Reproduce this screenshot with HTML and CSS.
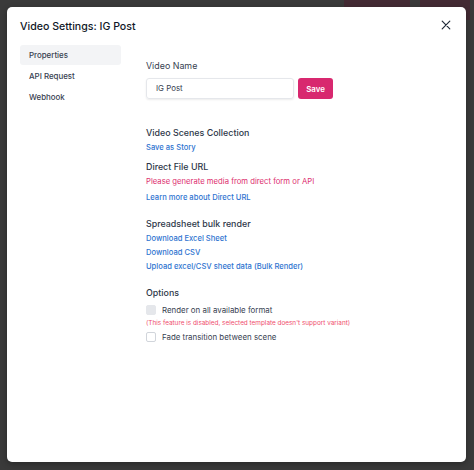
FILE: index.html
```html
<!DOCTYPE html>
<html lang="en">
<head>
<meta charset="utf-8">
<title>Video Settings</title>
<link rel="stylesheet" href="styles.css">
</head>
<body>
<div class="backdrop">
  <span class="bg-block bg-a"></span>
  <span class="bg-block bg-b"></span>
</div>
<div class="modal">
  <div class="modal-header">
    <h1 class="modal-title">Video Settings: IG Post</h1>
    <button class="close" aria-label="Close">
      <svg width="10" height="10" viewBox="0 0 10 10"><path d="M1.2 1.2L8.8 8.8M8.8 1.2L1.2 8.8" stroke="#1f2937" stroke-width="1.2" stroke-linecap="round"/></svg>
    </button>
  </div>
  <div class="modal-body">
    <nav class="side">
      <a class="side-item active">Properties</a>
      <a class="side-item">API Request</a>
      <a class="side-item">Webhook</a>
    </nav>
    <main class="content">
      <section class="name-section">
        <label class="label">Video Name</label>
        <div class="name-row">
          <div class="input">IG Post</div>
          <button class="save">Save</button>
        </div>
      </section>

      <section class="group first">
        <h2 class="heading">Video Scenes Collection</h2>
        <a class="link">Save as Story</a>
      </section>

      <section class="group tight">
        <h2 class="heading">Direct File URL</h2>
        <p class="warn">Please generate media from direct form or API</p>
        <a class="link more">Learn more about Direct URL</a>
      </section>

      <section class="group">
        <h2 class="heading">Spreadsheet bulk render</h2>
        <a class="link">Download Excel Sheet</a>
        <a class="link">Download CSV</a>
        <a class="link">Upload excel/CSV sheet data (Bulk Render)</a>
      </section>

      <section class="group">
        <h2 class="heading">Options</h2>
        <div class="check-row">
          <span class="box disabled"></span>
          <span class="check-label">Render on all available format</span>
        </div>
        <p class="note">(This feature is disabled, selected template doesn't support variant)</p>
        <div class="check-row fade">
          <span class="box"></span>
          <span class="check-label">Fade transition between scene</span>
        </div>
      </section>
    </main>
  </div>
</div>
</body>
</html>
```

FILE: styles.css
```css
* { box-sizing: border-box; }
html, body { margin: 0; padding: 0; }
body {
  width: 474px;
  height: 470px;
  background: #3a3a3a;
  font-family: Inter, "Noto Sans", "Liberation Sans", sans-serif;
  padding: 7px 0 0 7px;
  position: relative;
  overflow: hidden;
}
.backdrop { position: absolute; inset: 0; }
.bg-block { position: absolute; top: 0; height: 20px; background: #432a33; }
.bg-a { left: 344px; width: 66px; }
.bg-b { left: 420px; width: 50px; }

.modal {
  position: relative;
  width: 459px;
  height: 455px;
  background: #fff;
  border-radius: 5px;
  padding: 11px 13px;
  box-shadow: 0 2px 6px rgba(0,0,0,0.3);
}
.modal-header {
  display: flex;
  justify-content: space-between;
  align-items: center;
  height: 16px;
}
.modal-title {
  margin: 0;
  font-size: 10.6px;
  font-weight: 500;
  color: #111827;
}
.close {
  border: 0;
  background: none;
  padding: 0;
  margin-right: 2px;
  margin-top: -2px;
  width: 10px;
  height: 10px;
  display: flex;
}
.modal-body {
  display: grid;
  grid-template-columns: 101px 1fr;
  column-gap: 25px;
  margin-top: 11px;
}
.side { display: flex; flex-direction: column; }
.side-item {
  height: 21px;
  line-height: 21px;
  padding-left: 9px;
  font-size: 7.9px;
  font-weight: 500;
  color: #374151;
  border-radius: 3px;
}
.side-item.active { background: #f3f4f6; height: 20px; line-height: 20px; margin-bottom: 1px; }

.content { padding-top: 14px; display: flex; flex-direction: column; }
.label, .heading {
  display: block;
  margin: 0;
  font-size: 8.9px;
  line-height: 14px;
  font-weight: 400;
  color: #374151;
}
.heading { font-weight: 500; color: #2d3748; }
.name-row { display: flex; gap: 4px; margin-top: 5px; }
.input {
  width: 148px;
  height: 21px;
  border: 1px solid #e5e7eb;
  border-radius: 3px;
  box-shadow: 0 1px 2px rgba(0,0,0,0.08);
  padding-left: 9px;
  font-size: 7.9px;
  line-height: 19px;
  color: #374151;
}
.save {
  width: 35px;
  height: 21px;
  border: 0;
  border-radius: 3px;
  background: #d8286f;
  color: #fff;
  font-family: inherit;
  font-size: 7.9px;
  font-weight: 600;
  padding: 0;
}
.group { display: flex; flex-direction: column; gap: 2px; margin-top: 13px; }
.group.first { margin-top: 27px; }
.group.tight { margin-top: 6px; }
.link {
  font-size: 7.6px;
  line-height: 12px;
  font-weight: 500;
  color: #2f74d0;
}
.link.more { margin-top: 2px; }
.warn {
  margin: 0;
  font-size: 7.7px;
  line-height: 12px;
  color: #dd2f70;
}
.check-row {
  display: flex;
  align-items: center;
  gap: 6px;
  height: 12px;
  margin-top: 2px;
}
.check-row.fade { margin-top: 1px; }
.box {
  width: 10px;
  height: 10px;
  border: 1px solid #d1d5db;
  border-radius: 2px;
  background: #fff;
}
.box.disabled { background: #e5e7eb; border-color: #e5e7eb; }
.check-label { font-size: 7.9px; color: #374151; }
.note {
  margin: 0;
  font-size: 6.4px;
  line-height: 10px;
  color: #ef4d6d;
}
```
